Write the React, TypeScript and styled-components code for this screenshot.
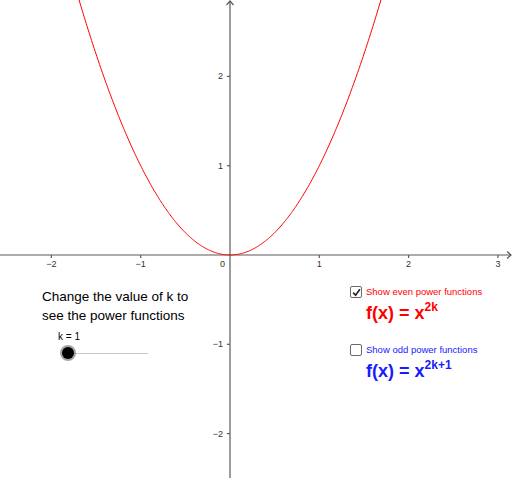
import React from "react";
import styled, { createGlobalStyle } from "styled-components";

const W = 512;
const H = 478;
const ORIGIN_X = 230;
const ORIGIN_Y = 255;
const UNIT = 89.3;

const GlobalStyle = createGlobalStyle`
  html, body {
    margin: 0;
    padding: 0;
    background: #ffffff;
  }
  body {
    font-family: "Liberation Sans", Arial, sans-serif;
  }
`;

const Canvas = styled.div`
  position: relative;
  width: ${W}px;
  height: ${H}px;
  overflow: hidden;
  background: #ffffff;
`;

const Graph = styled.svg`
  display: block;
  position: absolute;
  inset: 0;
`;

const AxisLabel = styled.text`
  font-family: "Liberation Sans", Arial, sans-serif;
  font-size: 9px;
  fill: #333333;
`;

const Note = styled.div`
  position: absolute;
  left: 42px;
  top: 287px;
  font-size: 13.5px;
  line-height: 19px;
  color: #000000;
`;

const SliderBox = styled.div`
  position: absolute;
  left: 60px;
  top: 331px;
  width: 88px;
`;

const SliderCaption = styled.div`
  font-size: 10px;
  line-height: 12px;
  color: #000000;
  margin-left: -2px;
`;

const Track = styled.div`
  position: relative;
  height: 1px;
  background: #c8c8c8;
  margin-left: 8px;
  margin-top: 10px;
`;

const Knob = styled.div`
  position: absolute;
  left: -6px;
  top: -6px;
  width: 12px;
  height: 12px;
  border-radius: 50%;
  background: #000000;
  box-shadow: 0 0 0 2px rgba(90, 90, 90, 0.55);
`;

const FunctionPanel = styled.div<{ $top: number; $color: string }>`
  position: absolute;
  left: 350px;
  top: ${(p) => p.$top}px;
  color: ${(p) => p.$color};
`;

const CheckRow = styled.label`
  display: flex;
  align-items: center;
  gap: 4px;
  font-size: 9.5px;
  line-height: 12px;
`;

const Box = styled.span`
  display: inline-flex;
  align-items: center;
  justify-content: center;
  width: 10px;
  height: 10px;
  border: 1px solid #6a6a6a;
  border-radius: 2px;
  background: #ffffff;
`;

const Formula = styled.div`
  margin-left: 16px;
  margin-top: 4px;
  font-family: "Liberation Sans", Arial, sans-serif;
  font-weight: bold;
  font-size: 18px;
  line-height: 22px;
  white-space: nowrap;
`;

const Sup = styled.sup`
  font-size: 12px;
  vertical-align: 8px;
  line-height: 0;
`;

const px = (x: number) => ORIGIN_X + x * UNIT;
const py = (y: number) => ORIGIN_Y - y * UNIT;

const curve = (() => {
  const pts: string[] = [];
  for (let i = 0; i <= 340; i++) {
    const x = -1.7 + (i / 340) * 3.4;
    pts.push(`${px(x).toFixed(2)},${py(x * x).toFixed(2)}`);
  }
  return "M" + pts.join(" L");
})();

const xTicks = [-2, -1, 1, 2, 3];
const yTicks = [2, 1, -1, -2];
const label = (n: number) => (n < 0 ? `\u2212${-n}` : `${n}`);

const Check = () => (
  <svg width="9" height="9" viewBox="0 0 9 9">
    <path d="M1.2 4.6 L3.6 7.2 L7.9 1.2" fill="none" stroke="#222" strokeWidth="1.6" />
  </svg>
);

export default function App() {
  return (
    <>
      <GlobalStyle />
      <Canvas>
        <Graph width={W} height={H} viewBox={`0 0 ${W} ${H}`}>
          <g stroke="#5a5a5a" strokeWidth="1.2" fill="none">
            <line x1="0" y1={ORIGIN_Y} x2={W - 1} y2={ORIGIN_Y} />
            <line x1={ORIGIN_X} y1="1" x2={ORIGIN_X} y2={H} />
            <path d={`M${W - 5} ${ORIGIN_Y - 3.5} L${W - 1} ${ORIGIN_Y} L${W - 5} ${ORIGIN_Y + 3.5}`} />
            <path d={`M${ORIGIN_X - 3.5} 5 L${ORIGIN_X} 1 L${ORIGIN_X + 3.5} 5`} />
            {xTicks.map((t) => (
              <line key={t} x1={px(t)} y1={ORIGIN_Y} x2={px(t)} y2={ORIGIN_Y + 3} />
            ))}
            {yTicks.map((t) => (
              <line key={t} x1={ORIGIN_X - 3} y1={py(t)} x2={ORIGIN_X} y2={py(t)} />
            ))}
          </g>
          {xTicks.map((t) => (
            <AxisLabel key={t} x={px(t)} y={ORIGIN_Y + 12} textAnchor="middle">
              {label(t)}
            </AxisLabel>
          ))}
          <AxisLabel x={ORIGIN_X - 5} y={ORIGIN_Y + 12} textAnchor="end">
            0
          </AxisLabel>
          {yTicks.map((t) => (
            <AxisLabel key={t} x={ORIGIN_X - 7} y={py(t) + 3} textAnchor="end">
              {label(t)}
            </AxisLabel>
          ))}
          <path d={curve} stroke="#ff0000" strokeWidth="1" fill="none" />
        </Graph>

        <Note>
          Change the value of k to
          <br />
          see the power functions
        </Note>

        <SliderBox>
          <SliderCaption>k = 1</SliderCaption>
          <Track>
            <Knob />
          </Track>
        </SliderBox>

        <FunctionPanel $top={286} $color="#ff0000">
          <CheckRow>
            <Box>
              <Check />
            </Box>
            Show even power functions
          </CheckRow>
          <Formula>
            f(x) = x<Sup>2k</Sup>
          </Formula>
        </FunctionPanel>

        <FunctionPanel $top={344} $color="#1a1aff">
          <CheckRow>
            <Box />
            Show odd power functions
          </CheckRow>
          <Formula>
            f(x) = x<Sup>2k+1</Sup>
          </Formula>
        </FunctionPanel>
      </Canvas>
    </>
  );
}
